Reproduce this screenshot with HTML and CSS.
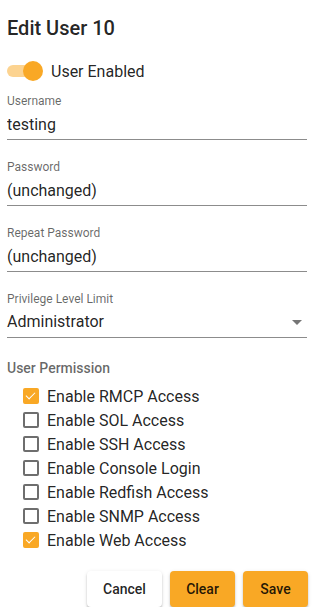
FILE: index.html
```html
<!DOCTYPE html>
<html lang="en">
    <head>
        <meta charset="utf-8">
        <title>Edit User</title>
        <link rel="stylesheet" href="styles.css">
    </head>
    <body>
        <div class='dialog'>

            <h2 class='dialogTitle'>Edit User 10</h2>

            <div class='switchRow'>
                <span class='switch on'>
                    <span class='switchTrack'></span>
                    <span class='switchThumb'></span>
                </span>
                <span class='switchLabel'>User Enabled</span>
            </div>

            <div class='field'>
                <label class='fieldLabel'>Username</label>
                <input class='fieldInput' type='text' value='testing'/>
            </div>

            <div class='field'>
                <label class='fieldLabel'>Password</label>
                <input class='fieldInput' type='text' value='(unchanged)'/>
            </div>

            <div class='field'>
                <label class='fieldLabel'>Repeat Password</label>
                <input class='fieldInput' type='text' value='(unchanged)'/>
            </div>

            <div class='field'>
                <label class='fieldLabel'>Privilege Level Limit</label>
                <div class='fieldInput select'>
                    <span>Administrator</span>
                    <svg class='selectArrow' width='10' height='5' viewBox='0 0 10 5'>
                        <path d='M0 0 L10 0 L5 5 Z' fill='#757575'/>
                    </svg>
                </div>
            </div>

            <div class='groupTitle'>User Permission</div>

            <div class='checkList'>
                <div class='checkRow'><span class='box checked'></span>Enable RMCP Access</div>
                <div class='checkRow'><span class='box'></span>Enable SOL Access</div>
                <div class='checkRow'><span class='box'></span>Enable SSH Access</div>
                <div class='checkRow'><span class='box'></span>Enable Console Login</div>
                <div class='checkRow'><span class='box'></span>Enable Redfish Access</div>
                <div class='checkRow'><span class='box'></span>Enable SNMP Access</div>
                <div class='checkRow'><span class='box checked'></span>Enable Web Access</div>
            </div>

            <div class='actions'>
                <button class='btn btnCancel'>Cancel</button>
                <button class='btn btnPrimary btnNarrow'>Clear</button>
                <button class='btn btnPrimary btnNarrow'>Save</button>
            </div>

        </div>
    </body>
</html>
```

FILE: styles.css
```css
body
{
    margin:           0;
    background-color: #ffffff;
    font-family:      Roboto, "Liberation Sans", sans-serif;
    color:            rgba(0, 0, 0, 0.87);
}

.dialog
{
    padding:          12px 10px 0 7px;
}

.dialogTitle
{
    margin:           0;
    font-size:        20px;
    font-weight:      500;
    line-height:      32px;
}

/* switch */

.switchRow
{
    display:          flex;
    align-items:      center;
    height:           24px;
    margin-top:       15px;
    margin-bottom:    10px;
}

.switch
{
    position:         relative;
    width:            36px;
    height:           24px;
    display:          inline-block;
}

.switchTrack
{
    position:         absolute;
    left:             0;
    top:              6px;
    width:            34px;
    height:           12px;
    border-radius:    6px;
    background-color: #fcd390;
}

.switchThumb
{
    position:         absolute;
    left:             16px;
    top:              2px;
    width:            20px;
    height:           20px;
    border-radius:    50%;
    background-color: #f9a825;
}

.switchLabel
{
    margin-left:      8px;
    font-size:        16px;
}

/* text fields */

.field
{
    margin-bottom:    19px;
}

.fieldLabel
{
    display:          block;
    font-size:        12px;
    line-height:      16px;
    color:            rgba(0, 0, 0, 0.6);
}

.fieldInput
{
    display:          block;
    box-sizing:       border-box;
    width:            100%;
    height:           31px;
    margin:           0;
    padding:          0;
    border:           none;
    border-bottom:    1px solid #8c8c8c;
    outline:          none;
    background:       transparent;
    font-family:      Roboto, "Liberation Sans", sans-serif;
    font-size:        16px;
    line-height:      30px;
    color:            rgba(0, 0, 0, 0.87);
}

.select
{
    display:          flex;
    align-items:      center;
    justify-content:  space-between;
}

.selectArrow
{
    margin-right:     5px;
}

/* permissions */

.groupTitle
{
    margin-top:       22px;
    font-size:        14px;
    font-weight:      500;
    line-height:      16px;
    color:            rgba(0, 0, 0, 0.6);
}

.checkList
{
    margin-top:       8px;
    padding-left:     16px;
}

.checkRow
{
    display:          flex;
    align-items:      center;
    height:           24px;
    font-size:        16px;
}

.box
{
    box-sizing:       border-box;
    width:            16px;
    height:           16px;
    margin-right:     8px;
    border:           2px solid #6e6e6e;
    border-radius:    2px;
    position:         relative;
}

.box.checked
{
    border-color:     #f9a825;
    background-color: #f9a825;
}

.box.checked::after
{
    content:          '';
    position:         absolute;
    left:             3px;
    top:              0px;
    width:            4px;
    height:           8px;
    border-right:     1.5px solid #ffffff;
    border-bottom:    1.5px solid #ffffff;
    transform:        rotate(45deg);
}

/* buttons */

.actions
{
    display:          flex;
    justify-content:  flex-end;
    gap:              8px;
    margin-top:       19px;
    margin-right:     -1px;
}

.btn
{
    height:           36px;
    padding:          0 16px;
    border:           none;
    border-radius:    4px;
    font-family:      Roboto, "Liberation Sans", sans-serif;
    font-size:        14px;
    font-weight:      500;
    color:            rgba(0, 0, 0, 0.87);
    box-shadow:       0 2px 2px rgba(0, 0, 0, 0.2), 0 1px 4px rgba(0, 0, 0, 0.1);
}

.btnCancel
{
    width:            75px;
    background-color: #ffffff;
}

.btnPrimary
{
    background-color: #f9a825;
}

.btnNarrow
{
    width:            65px;
}
```
